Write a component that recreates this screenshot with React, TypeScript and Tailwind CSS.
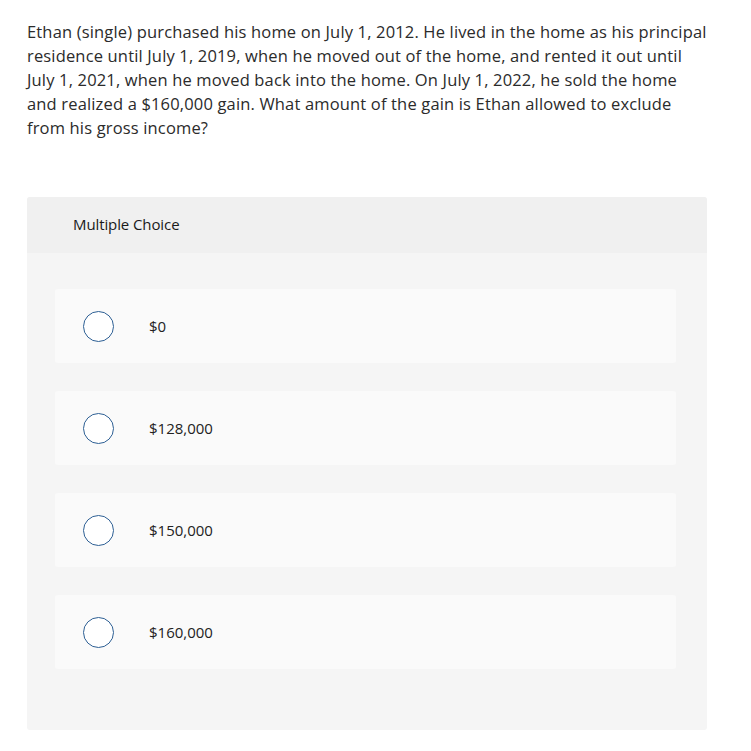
import React from "react";

const options = ["$0", "$128,000", "$150,000", "$160,000"];

const lines = [
  "Ethan (single) purchased his home on July 1, 2012. He lived in the home as his principal",
  "residence until July 1, 2019, when he moved out of the home, and rented it out until",
  "July 1, 2021, when he moved back into the home. On July 1, 2022, he sold the home",
  "and realized a $160,000 gain. What amount of the gain is Ethan allowed to exclude",
  "from his gross income?",
];

export default function App() {
  return (
    <div className="min-h-[751px] w-[751px] bg-white pl-[27px] pt-[20px]">
      <p
        className="w-[720px] whitespace-nowrap text-[16.5px] leading-[24px] text-[#2b2b2b]"
        style={{ fontFamily: "'Open Sans', sans-serif", letterSpacing: "0.16px" }}
      >
        {lines.map((l, i) => (
          <React.Fragment key={i}>
            {l}
            {i < lines.length - 1 && <br />}
          </React.Fragment>
        ))}
      </p>
      <div className="mt-[57px] w-[680px] overflow-hidden rounded-[3px] bg-[#f5f5f5]">
        <div
          className="flex h-[56px] items-center bg-[#f0f0f0] pb-[2px] pl-[46px] text-[15px] text-[#1a1a1a]"
          style={{ fontFamily: "'Open Sans', sans-serif", letterSpacing: "-0.1px" }}
        >
          Multiple Choice
        </div>
        <div className="flex flex-col gap-[28px] px-[28px] pb-[61px] pt-[36px]">
          {options.map((o) => (
            <div
              key={o}
              className="flex h-[74px] w-[621px] items-center rounded-[3px] bg-[#fafafa] pl-[28px]"
            >
              <div className="h-[31px] w-[31px] rounded-full border-[1.5px] border-[#2d5f94] bg-white" />
              <span
                className="ml-[35px] text-[15px] text-[#222]"
                style={{ fontFamily: "'Open Sans', sans-serif" }}
              >
                {o}
              </span>
            </div>
          ))}
        </div>
      </div>
    </div>
  );
}
